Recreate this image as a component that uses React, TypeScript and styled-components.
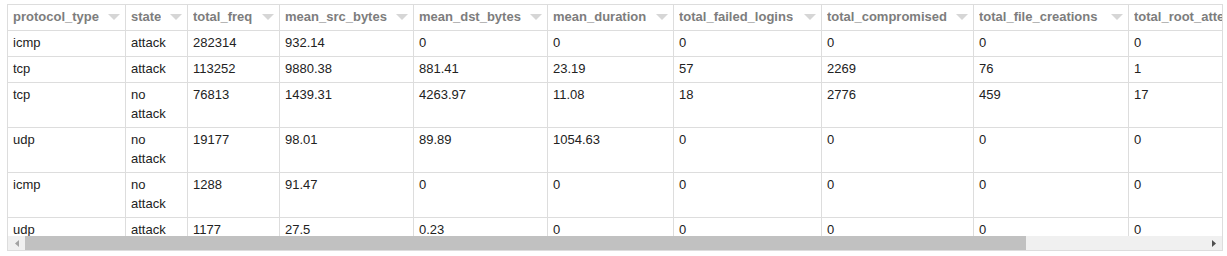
import React from "react";
import styled, { createGlobalStyle } from "styled-components";

const GlobalStyle = createGlobalStyle`
  html, body { margin: 0; padding: 0; background: #ffffff; }
  body { font-family: "Liberation Sans", Arial, sans-serif; }
`;

type Column = { key: string; width: number };

const columns: Column[] = [
  { key: "protocol_type", width: 118 },
  { key: "state", width: 62 },
  { key: "total_freq", width: 92 },
  { key: "mean_src_bytes", width: 134 },
  { key: "mean_dst_bytes", width: 134 },
  { key: "mean_duration", width: 126 },
  { key: "total_failed_logins", width: 148 },
  { key: "total_compromised", width: 152 },
  { key: "total_file_creations", width: 155 },
  { key: "total_root_attempts", width: 160 },
  { key: "total_shells", width: 150 },
];

const rows: string[][] = [
  ["icmp", "attack", "282314", "932.14", "0", "0", "0", "0", "0", "0", "0"],
  ["tcp", "attack", "113252", "9880.38", "881.41", "23.19", "57", "2269", "76", "1", "0"],
  ["tcp", "no attack", "76813", "1439.31", "4263.97", "11.08", "18", "2776", "459", "17", "0"],
  ["udp", "no attack", "19177", "98.01", "89.89", "1054.63", "0", "0", "0", "0", "0"],
  ["icmp", "no attack", "1288", "91.47", "0", "0", "0", "0", "0", "0", "0"],
  ["udp", "attack", "1177", "27.5", "0.23", "0", "0", "0", "0", "0", "0"],
];

const FRAME_WIDTH = 1216;
const BUTTON_WIDTH = 17;

const Frame = styled.div`
  box-sizing: border-box;
  margin: 4px 0 0 7px;
  width: ${FRAME_WIDTH}px;
  height: 247px;
  border: 1px solid #dddddd;
  display: flex;
  flex-direction: column;
  background: #ffffff;
`;

const Viewport = styled.div`
  flex: 1;
  overflow: hidden;
`;

const Grid = styled.div<{ $template: string }>`
  display: grid;
  grid-template-columns: ${(p) => p.$template};
  width: max-content;
`;

const Cell = styled.div`
  box-sizing: border-box;
  border-right: 1px solid #dddddd;
  border-bottom: 1px solid #dddddd;
  padding: 2px 6px 4px 5px;
  font-size: 13px;
  line-height: 19px;
  color: #222222;
  overflow: hidden;
`;

const HeaderCell = styled(Cell)`
  display: flex;
  align-items: center;
  justify-content: space-between;
  gap: 6px;
  padding-right: 5px;
  font-weight: bold;
  color: #7d7d7d;
  white-space: nowrap;
`;

const HeaderLabel = styled.span`
  overflow: hidden;
`;

const SortIcon = styled.svg`
  flex: none;
  width: 12px;
  height: 6px;
  fill: #d6d6d6;
`;

const ScrollBar = styled.div`
  flex: none;
  height: 14px;
  display: flex;
  background: #f0f0f0;
`;

const ScrollButton = styled.div<{ $active: boolean }>`
  flex: none;
  width: ${BUTTON_WIDTH}px;
  display: flex;
  align-items: center;
  justify-content: center;
  svg {
    width: 4px;
    height: 7px;
    fill: ${(p) => (p.$active ? "#505050" : "#a3a3a3")};
  }
`;

const Track = styled.div`
  flex: 1;
  display: flex;
`;

const Thumb = styled.div`
  height: 100%;
  background: #c1c1c1;
`;

export default function App() {
  const template = columns.map((c) => `${c.width}px`).join(" ");
  const contentWidth = columns.reduce((s, c) => s + c.width, 0);
  const viewportWidth = FRAME_WIDTH - 2;
  const trackWidth = viewportWidth - BUTTON_WIDTH * 2;
  const thumbWidth = Math.round((trackWidth * viewportWidth) / contentWidth);

  return (
    <>
      <GlobalStyle />
      <Frame>
        <Viewport>
          <Grid $template={template}>
            {columns.map((c) => (
              <HeaderCell key={c.key}>
                <HeaderLabel>{c.key}</HeaderLabel>
                <SortIcon viewBox="0 0 12 6">
                  <polygon points="0,0 12,0 6,6" />
                </SortIcon>
              </HeaderCell>
            ))}
            {rows.map((r, ri) =>
              r.map((v, ci) => <Cell key={`${ri}-${ci}`}>{v}</Cell>)
            )}
          </Grid>
        </Viewport>
        <ScrollBar>
          <ScrollButton $active={false}>
            <svg viewBox="0 0 4 7">
              <polygon points="4,0 4,7 0,3.5" />
            </svg>
          </ScrollButton>
          <Track>
            <Thumb style={{ width: thumbWidth }} />
          </Track>
          <ScrollButton $active={true}>
            <svg viewBox="0 0 4 7">
              <polygon points="0,0 4,3.5 0,7" />
            </svg>
          </ScrollButton>
        </ScrollBar>
      </Frame>
    </>
  );
}
